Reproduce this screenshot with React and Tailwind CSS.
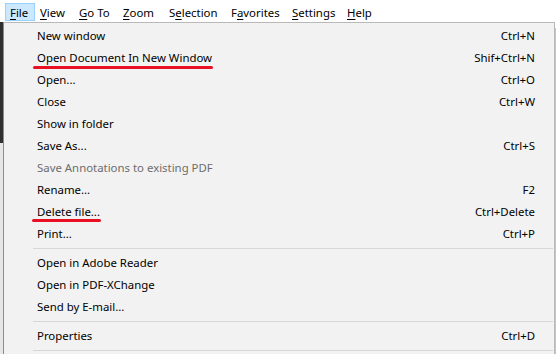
import React from "react";

const barItems = [
  { pre: "", u: "F", post: "ile", w: "w-[30px]", active: true },
  { pre: "", u: "V", post: "iew", w: "w-[39px]" },
  { pre: "", u: "G", post: "o To", w: "w-[44px]" },
  { pre: "", u: "Z", post: "oom", w: "w-[46px]" },
  { pre: "S", u: "e", post: "lection", w: "w-[62px]" },
  { pre: "F", u: "a", post: "vorites", w: "w-[61px]" },
  { pre: "", u: "S", post: "ettings", w: "w-[55px]" },
  { pre: "", u: "H", post: "elp", w: "w-[34px]" },
];

const groups = [
  [
    ["New window", "Ctrl+N"],
    ["Open Document In New Window", "Shif+Ctrl+N"],
    ["Open...", "Ctrl+O"],
    ["Close", "Ctrl+W"],
    ["Show in folder", ""],
    ["Save As...", "Ctrl+S"],
    ["Save Annotations to existing PDF", "", true],
    ["Rename...", "F2"],
    ["Delete file...", "Ctrl+Delete"],
    ["Print...", "Ctrl+P"],
  ],
  [
    ["Open in Adobe Reader", ""],
    ["Open in PDF-XChange", ""],
    ["Send by E-mail...", ""],
  ],
  [["Properties", "Ctrl+D"]],
];

function Sep() {
  return (
    <div className="h-[7px] flex items-center ml-[29px] mr-[1px]">
      <div className="h-px w-full bg-[#d7d7d7]" />
    </div>
  );
}

export default function App() {
  return (
    <div
      className="relative w-[556px] h-[354px] overflow-hidden bg-white text-[11.4px] text-black"
      style={{ fontFamily: '"Noto Sans", "Segoe UI", sans-serif' }}
    >
      {/* Menu bar */}
      <div className="flex h-[22px] pl-[5px] pt-[3px]">
        {barItems.map((b, i) => (
          <div
            key={i}
            className={
              "h-[18px] flex items-center pl-[4px] pt-[1px] leading-none border " +
              b.w +
              (b.active ? " bg-[#cce8ff] border-[#99d1ff]" : " border-transparent")
            }
          >
            <span>
              {b.pre}
              <span className="underline underline-offset-[2px]">{b.u}</span>
              {b.post}
            </span>
          </div>
        ))}
      </div>

      {/* Body */}
      <div className="flex h-[332px]">
        <div className="w-[3px] flex flex-col">
          <div className="h-[121px] bg-[#2f2f2f]" />
          <div className="flex-1 bg-[#e6e6e6]" />
        </div>
        <div className="w-[552px] h-[340px] bg-[#f2f2f2] border border-[#b9b9b9] border-l-[#8c8c8c] pt-[2px]">
          {groups.map((g, gi) => (
            <div key={gi}>
              {gi > 0 && <Sep />}
              {g.map(([label, sc, dis], i) => (
                <div
                  key={i}
                  className={
                    "h-[22px] flex items-center justify-between pl-[33px] pr-[19px] " +
                    (dis ? "text-[#6d6d6d]" : "text-black")
                  }
                >
                  <span>{label}</span>
                  <span>{sc}</span>
                </div>
              ))}
            </div>
          ))}
          <Sep />
        </div>
        <div className="w-[1px] mt-[6px] bg-[#c4c4c4]" />
      </div>

      {/* Red annotations */}
      <div className="absolute left-[33px] top-[66px] w-[180px] h-[3px] rounded-full bg-[#e81123]" />
      <div className="absolute left-[32px] top-[219px] w-[69px] h-[3px] rounded-full bg-[#e81123]" />
    </div>
  );
}
